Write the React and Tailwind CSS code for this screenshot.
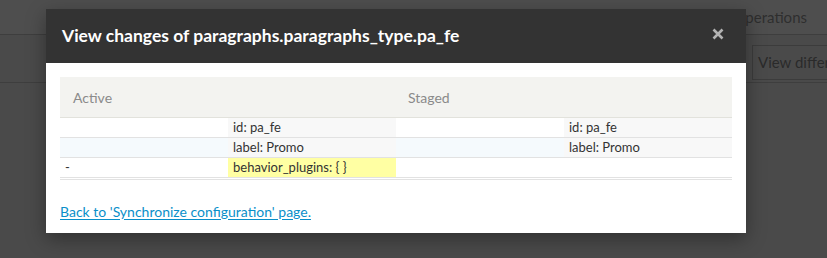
import React from "react";

const rows = [
  { a1: "", a2: "id: pa_fe", s1: "", s2: "id: pa_fe", bg1: "bg-white", bg2: "bg-[#f8f8f8]", bg3: "bg-white", bg4: "bg-[#f8f8f8]" },
  { a1: "", a2: "label: Promo", s1: "", s2: "label: Promo", bg1: "bg-[#f5fafd]", bg2: "bg-[#f8f8f8]", bg3: "bg-[#f5fafd]", bg4: "bg-[#f8f8f8]" },
  { a1: "-", a2: "behavior_plugins: { }", s1: "", s2: "", bg1: "bg-white", bg2: "bg-[#ffffa3]", bg3: "bg-white", bg4: "bg-white" },
];

export default function App() {
  return (
    <div className="relative w-[827px] h-[258px] overflow-hidden bg-[#4a4a4a] font-['Lato','Liberation_Sans',sans-serif]">
      {/* page behind the overlay */}
      <div className="h-[35px] bg-[#4e4e4e] border-b border-[#3e3e3e] flex justify-end items-center pr-[20px]">
        <span className="text-[15px] text-[#2e2e2e]">Operations</span>
      </div>
      <div className="h-[48px] border-b border-[#3e3e3e] flex justify-end items-start pt-[10px]">
        <div className="h-[35px] border-y border-l border-[#3c3c3c] pl-[5px] flex items-center text-[15px] text-[#2a2a2a] w-[75px] whitespace-nowrap overflow-hidden">
          View differe
        </div>
      </div>

      {/* dialog */}
      <div className="absolute left-[46px] top-[9px] w-[700px] h-[224px] bg-white shadow-[0_6px_18px_rgba(0,0,0,0.35)]">
        <div className="h-[54px] bg-[#333333] flex items-center justify-between pl-[16px] pr-[22px]">
          <h1 className="text-[17.5px] font-bold text-white">
            View changes of paragraphs.paragraphs_type.pa_fe
          </h1>
          <svg width="12" height="12" viewBox="0 0 12 12" className="mt-[-4px]">
            <path d="M1.5 1.5 L10.5 10.5 M10.5 1.5 L1.5 10.5" stroke="#b3b3b3" strokeWidth="2.6" strokeLinecap="butt" />
          </svg>
        </div>
        <div className="px-[14px] pt-[14px]">
          <table className="w-[672px] border-collapse text-[13px] text-[#333] table-fixed">
            <thead>
              <tr className="h-[40px] bg-[#f3f3f0] border-b border-[#e2e2dc]">
                <th colSpan={2} className="text-left font-normal text-[14px] text-[#8a8a8a] pl-[13px] pt-[1px]">Active</th>
                <th colSpan={2} className="text-left font-normal text-[14px] text-[#8a8a8a] pl-[12px] pt-[1px]">Staged</th>
              </tr>
            </thead>
            <tbody>
              {rows.map((r, i) => (
                <tr key={i} className="h-[20px] border-b border-[#e2e2e2]">
                  <td className={`w-[168px] pl-[5px] leading-[19px] ${r.bg1}`}>{r.a1}</td>
                  <td className={`w-[168px] pl-[5px] leading-[19px] ${r.bg2}`}>{r.a2}</td>
                  <td className={`w-[168px] pl-[5px] leading-[19px] ${r.bg3}`}>{r.s1}</td>
                  <td className={`w-[168px] pl-[5px] leading-[19px] ${r.bg4}`}>{r.s2}</td>
                </tr>
              ))}
            </tbody>
          </table>
          <div className="w-[672px] h-[2px] border-b border-[#e2e2e2]"></div>
          <div className="pt-[19px]">
            <a href="#" className="text-[14px] text-[#0a8fc9] underline underline-offset-[2px]">
              Back to 'Synchronize configuration' page.
            </a>
          </div>
        </div>
      </div>
    </div>
  );
}
